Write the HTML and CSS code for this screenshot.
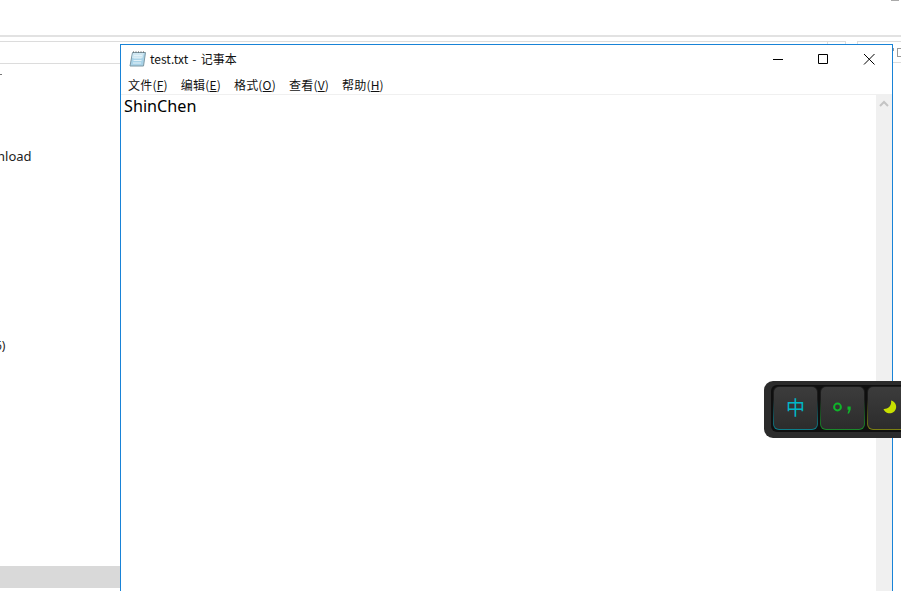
FILE: index.html
```html
<!DOCTYPE html>
<html lang="zh-CN">

<head>
    <meta charset="UTF-8">
    <title>test.txt - 记事本</title>
    <link rel="stylesheet" href="styles.css">
</head>

<body>
    <!-- explorer window behind -->
    <div class="explorer">
        <div class="top-line"></div>
        <div class="address-line"></div>
        <div class="search-box"></div>
        <div class="search-box2"></div>
        <div class="side-line"></div>
        <span class="side-mark"></span>
        <span class="side-text download">nload</span>
        <span class="side-text paren">6)</span>
        <div class="side-selected"></div>
        <div class="corner-mark"></div>
        <div class="peek-tick"></div>
        <div class="peek-glyph"></div>
    </div>

    <div class="notepad">
        <div class="title-bar">
            <svg class="app-icon" width="17" height="16" viewBox="0 0 17 16">
                <path d="M3.500 1.500h13l-2 13.500H1z" fill="#a9d3e8" stroke="#7d97a3" />
                <path d="M4 2h11l-1.500 5H3z" fill="#cfe7f2" />
                <path d="M4.500 1.500v-1M7 1.500v-1M9.500 1.500v-1M12 1.500v-1M14.500 1.500v-1" stroke="#555" />
                <path d="M5 4.500h8M4.500 7h8M4.500 9.500h8M4 12h8" stroke="#e4f2f8" />
            </svg>
            <span class="title-text">test.txt - 记事本</span>
            <div class="window-btns">
                <svg width="46" height="30" viewBox="0 0 46 30"><path d="M19 14.500h10" stroke="#000" /></svg>
                <svg width="46" height="30" viewBox="0 0 46 30"><path d="M18.500 9.500h9v9h-9z" fill="none" stroke="#000" /></svg>
                <svg width="46" height="30" viewBox="0 0 46 30"><path d="M18 9l10.500 10.500M28.500 9L18 19.500" stroke="#000" fill="none" /></svg>
            </div>
        </div>
        <div class="menu-bar">
            <span>文件(<u>F</u>)</span>
            <span>编辑(<u>E</u>)</span>
            <span>格式(<u>O</u>)</span>
            <span>查看(<u>V</u>)</span>
            <span>帮助(<u>H</u>)</span>
        </div>
        <div class="edit-area">
            <div class="edit-text">ShinChen</div>
            <div class="scroll-bar">
                <svg width="16" height="16" viewBox="0 0 16 16"><path d="M4 10l4-4 4 4" fill="none" stroke="#c4c4c4" stroke-width="2" /></svg>
            </div>
        </div>
    </div>

    <!-- ime status bar -->
    <div class="ime-bar">
        <div class="ime-keys">
            <div class="ime-key key-cyan"><span>中</span></div>
            <div class="ime-key key-green">
                <svg width="20" height="16" viewBox="0 0 20 16">
                    <circle cx="4.500" cy="8" r="3.400" fill="none" stroke="#0fb52a" stroke-width="2" />
                    <path d="M14.500 7.500h3.200v3L16 14.500h-1.500l1.200-3.800h-1.200z" fill="#0fb52a" />
                </svg>
            </div>
            <div class="ime-key key-yellow">
                <svg width="14" height="14" viewBox="0 0 14 14"><path d="M8 .5A6.500 6.500 0 1 1 .5 9 7 7 0 0 0 8 .5z" fill="#c8e000" /></svg>
            </div>
        </div>
    </div>
</body>

</html>
```

FILE: styles.css
```css
html,
body {
    margin: 0;
    height: 100%;
    overflow: hidden;
    background: #fff;
}

body {
    position: relative;
    font-family: "Noto Sans CJK SC", "Liberation Sans", sans-serif;
}

/* explorer behind the notepad */
.explorer {
    position: absolute;
    inset: 0;
}

.explorer>* {
    position: absolute;
}

.top-line {
    left: 0;
    right: 0;
    top: 35px;
    height: 2px;
    background: #e2e2e2;
}

.address-line {
    left: 0;
    width: 828px;
    top: 41px;
    height: 1px;
    background: #dcdcdc;
}

.search-box {
    left: 827px;
    top: 41px;
    width: 17px;
    height: 3px;
    border: 1px solid #dcdcdc;
    border-bottom: 0;
}

.search-box2 {
    left: 857px;
    top: 41px;
    width: 50px;
    height: 20px;
    border: 1px solid #dcdcdc;
}

.side-line {
    left: 0;
    width: 120px;
    top: 63px;
    height: 1px;
    background: #dcdcdc;
}

.side-mark {
    left: 0;
    top: 74px;
    width: 2px;
    height: 1px;
    background: #777;
}

.side-text {
    font-family: "Noto Sans", sans-serif;
    font-size: 13px;
    color: #222;
    line-height: 16px;
}

.download {
    left: -3px;
    top: 148px;
}

.paren {
    left: -5px;
    top: 338px;
    font-size: 12px;
}

.side-selected {
    left: 0;
    width: 120px;
    top: 566px;
    height: 22px;
    background: #d9d9d9;
}

.corner-mark {
    left: 891px;
    top: 0;
    width: 8px;
    height: 1px;
    background: #aaa;
}

.peek-tick {
    left: 893px;
    top: 48px;
    width: 1px;
    height: 3px;
    background: #999;
}

.peek-glyph {
    left: 897px;
    top: 48px;
    width: 6px;
    height: 7px;
    border: 1px solid #999;
}

/* notepad window */
.notepad {
    position: absolute;
    left: 120px;
    top: 44px;
    width: 771px;
    height: 560px;
    background: #fff;
    border: 1px solid #1883d7;
    display: flex;
    flex-direction: column;
}

.title-bar {
    height: 27px;
    margin-bottom: 2px;
    display: flex;
    align-items: center;
    padding-left: 8px;
    font-size: 12px;
    color: #111;
}

.app-icon {
    margin-right: 4px;
}

.title-text {
    flex: 1;
    word-spacing: 1.500px;
}

.window-btns {
    display: flex;
    align-self: flex-start;
}

.window-btns svg {
    display: block;
}

.menu-bar {
    height: 20px;
    display: flex;
    align-items: center;
    gap: 13px;
    padding-left: 7px;
    font-size: 12px;
    letter-spacing: .2px;
    color: #111;
}

.edit-area {
    flex: 1;
    display: flex;
    border-top: 1px solid #f0f0f0;
}

.edit-text {
    flex: 1;
    padding: 0 3px;
    font-family: "Noto Sans", sans-serif;
    font-size: 16.200px;
    line-height: 22px;
    color: #000;
}

.scroll-bar {
    width: 16px;
    background: #f0f0f0;
}

.scroll-bar svg {
    display: block;
    margin-top: 1px;
}

/* ime bar */
.ime-bar {
    position: absolute;
    left: 764px;
    top: 381px;
    width: 160px;
    height: 57px;
    box-sizing: border-box;
    padding: 4px 7px 6px;
    border-radius: 9px;
    background: #2b2b2b;
}

.ime-keys {
    height: 100%;
    box-sizing: border-box;
    padding: 1px 2px 2px;
    display: flex;
    gap: 2px;
    border-radius: 6px;
    background: #0f0f0f;
}

.ime-key {
    width: 45px;
    flex: none;
    box-sizing: border-box;
    border: 1px solid transparent;
    border-radius: 6px;
    display: flex;
    align-items: center;
    justify-content: center;
    font-size: 19px;
    padding-bottom: 3px;
}

.key-cyan {
    color: #00b8c8;
    background: linear-gradient(#3c3c3c, #2c2c2c) padding-box, linear-gradient(#1c1c1c 30%, #0c7f8c) border-box;
}

.key-green {
    background: linear-gradient(#3c3c3c, #2c2c2c) padding-box, linear-gradient(#1c1c1c 30%, #1a8a2a) border-box;
}

.key-yellow {
    background: linear-gradient(#3c3c3c, #2c2c2c) padding-box, linear-gradient(#1c1c1c 30%, #7d8212) border-box;
}
```
